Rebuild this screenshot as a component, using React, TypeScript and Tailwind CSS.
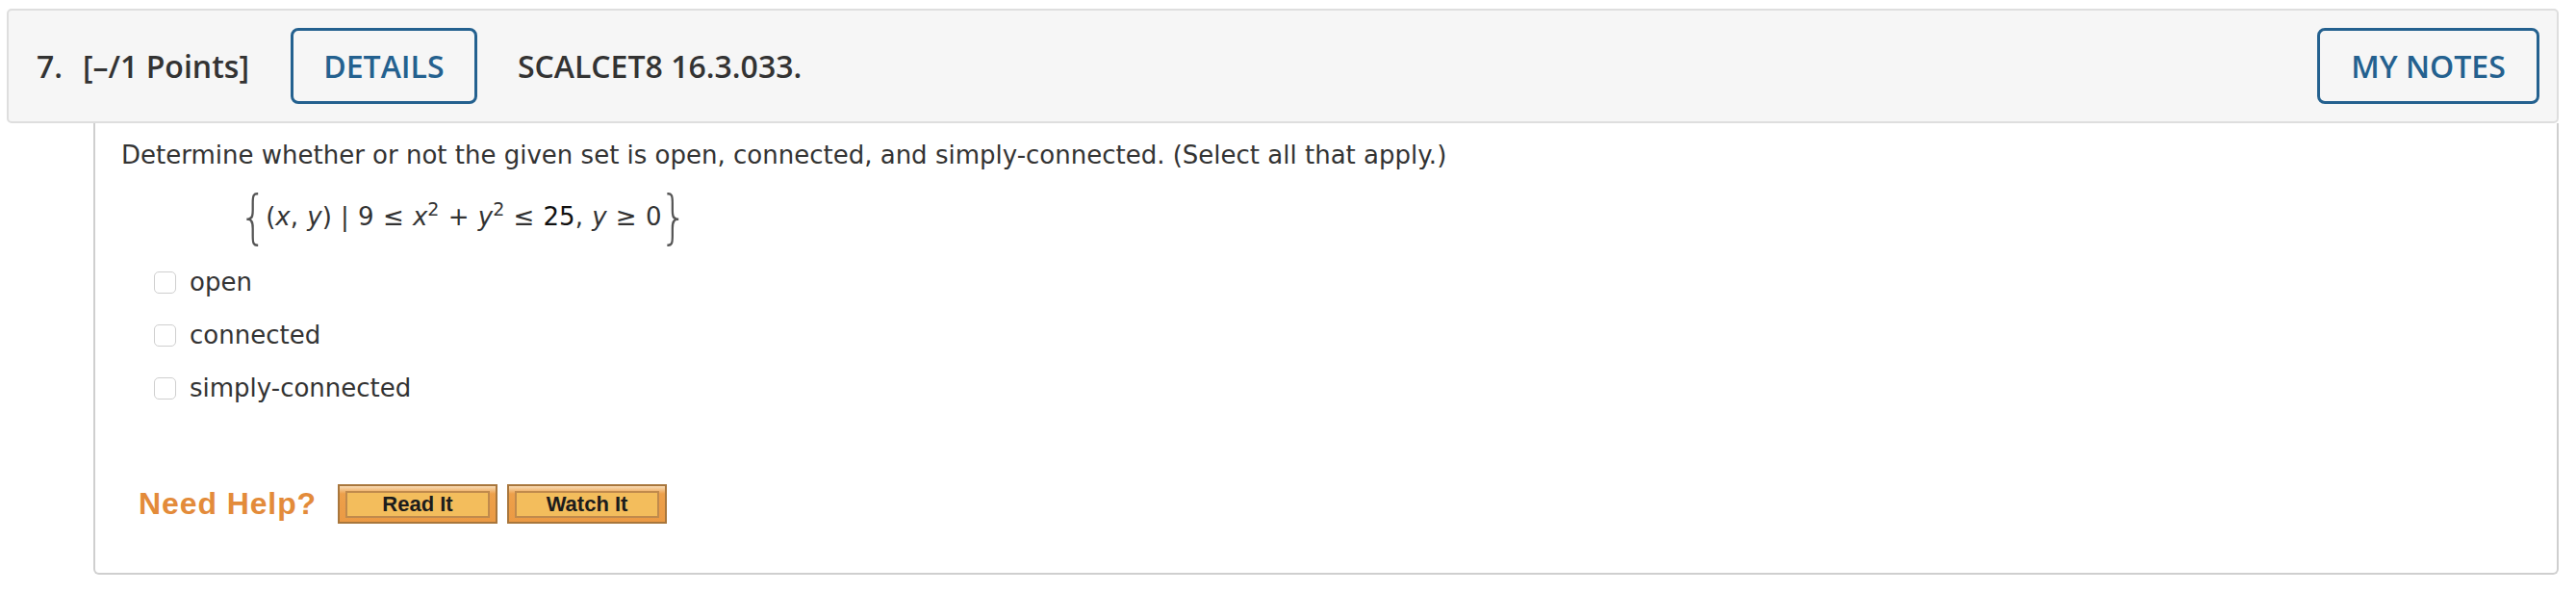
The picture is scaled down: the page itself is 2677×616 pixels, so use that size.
const body = "font-['DejaVu_Sans',_Verdana,_sans-serif]"

function HelpButton({ label }: { label: string }) {
  return (
    <div className="h-[41px] w-[166px] border-2 border-[#a8763c] bg-[linear-gradient(to_bottom,#f9dcb6_0px,#eda04a_8px,#eb9a44_100%)] px-[6px] pt-[5px] pb-[4px]">
      <div className="flex h-full items-center justify-center border-2 border-[#c08a4c] bg-[#f3bd5c] font-['Liberation_Sans',_Arial,_sans-serif] text-[22px] leading-none font-bold text-[#1c1c1c]">
        {label}
      </div>
    </div>
  )
}

function Option({ label }: { label: string }) {
  return (
    <label className="flex h-[55px] items-center">
      <span className="h-[23px] w-[23px] rounded-[5px] border border-[#cfcfcf] bg-white" />
      <span className="ml-[14px] text-[26px] text-[#333]">{label}</span>
    </label>
  )
}

export default function App() {
  return (
    <div className="min-h-[616px] bg-white pt-[9px] pr-[18px] pl-[7px]">
      {/* question header */}
      <div className="flex h-[119px] items-center rounded-[5px] border-2 border-[#dedede] bg-[#f6f6f6] pr-[18px] pl-[29px] font-['Open_Sans',_sans-serif] text-[32px] font-semibold text-[#333]">
        <span>7.</span>
        <span className="ml-[21px]">[–/1 Points]</span>
        <button className="ml-[43px] h-[79px] w-[194px] rounded-[8px] border-[3px] border-[#24618f] text-[32px] font-semibold text-[#24618f]">
          DETAILS
        </button>
        <span className="ml-[42px]">SCALCET8 16.3.033.</span>
        <button className="ml-auto h-[79px] w-[231px] rounded-[8px] border-[3px] border-[#24618f] text-[32px] font-semibold text-[#24618f]">
          MY NOTES
        </button>
      </div>

      {/* question body */}
      <div className={`ml-[90px] h-[469px] rounded-b-[6px] border-x-2 border-b-2 border-[#cfcfcf] bg-white pt-[14px] pl-[27px] ${body}`}>
        <p className="text-[26px] leading-[39px] text-[#333]">
          Determine whether or not the given set is open, connected, and simply-connected. (Select all that apply.)
        </p>

        <div className="mt-[14px] ml-[118px] flex h-[60px] items-center text-[26px] text-[#333]">
          <span className="-mr-[6px] text-[60px] leading-none font-extralight text-[#555] scale-x-75">{'{'}</span>
          <span className="[word-spacing:1px]">
            (<i>x</i>, <i>y</i>) | 9 ≤ <i>x</i>
            <sup className="text-[19px]">2</sup> + <i>y</i>
            <sup className="text-[19px]">2</sup> ≤ <span className="text-[#111]">25</span>, <i>y</i> ≥ 0
          </span>
          <span className="-ml-[6px] text-[60px] leading-none font-extralight text-[#555] scale-x-75">{'}'}</span>
        </div>

        <div className="mt-[11px] ml-[34px] flex flex-col">
          <Option label="open" />
          <Option label="connected" />
          <Option label="simply-connected" />
        </div>

        <div className="mt-[68px] ml-[18px] flex items-center">
          <span className="font-['Liberation_Sans',_Arial,_sans-serif] text-[32px] font-bold tracking-[0.9px] text-[#e38b3a]">
            Need Help?
          </span>
          <div className="ml-[22px] flex gap-[10px]">
            <HelpButton label="Read It" />
            <HelpButton label="Watch It" />
          </div>
        </div>
      </div>
    </div>
  )
}
